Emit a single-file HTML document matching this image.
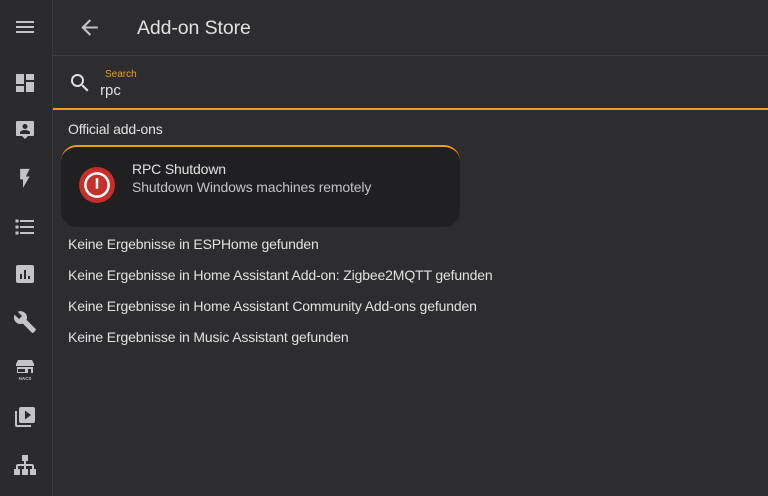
<!DOCTYPE html>
<html><head><meta charset="utf-8"><style>
*{margin:0;padding:0;box-sizing:border-box}
body{width:768px;height:496px;overflow:hidden;background:#2d2d2f;font-family:"Liberation Sans",Roboto,sans-serif;color:#e1e1e1;position:relative}
.side{position:absolute;left:0;top:0;width:53px;height:496px;background:#2b2b2d;border-right:1px solid #3a3a3c}
.side svg{position:absolute;left:13px;width:24px;height:24px;fill:#c4c4c6}
.hdr{position:absolute;left:53px;top:0;right:0;height:56px;border-bottom:1px solid #3e3e40;background:#2d2d2f}
.t{position:absolute;font-size:14px;color:#e1e1e1;letter-spacing:-0.15px}
</style></head><body>
<div class="side">
<svg style="top:15px" viewBox="0 0 24 24"><path d="M3,6H21V8H3V6M3,11H21V13H3V11M3,16H21V18H3V16Z"/></svg>
<svg style="top:71px" viewBox="0 0 24 24"><path d="M13,3V9H21V3M13,21H21V11H13M3,21H11V15H3M3,13H11V3H3V13Z"/></svg>
<svg style="top:118px" viewBox="0 0 24 24"><path d="M4,3H20A1,1 0 0 1 21,4V17A1,1 0 0 1 20,18H15L12,21L9,18H4A1,1 0 0 1 3,17V4A1,1 0 0 1 4,3M12,6A2.5,2.5 0 1 0 12,11A2.5,2.5 0 1 0 12,6M7,16H17V14.5C17,13 14.5,12 12,12C9.5,12 7,13 7,14.5Z"/></svg>
<svg style="top:167px" viewBox="0 0 24 24"><path d="M7,2V13H10V22L17,10H13L17,2H7Z" transform="translate(0.5 0) scale(0.95)"/></svg>
<svg style="top:215px" viewBox="0 0 24 24"><path d="M7,5H21V7H7V5M7,13V11H21V13H7M7,19V17H21V19H7M2.5,4.5H5.5V7.5H2.5ZM2.5,10.5H5.5V13.5H2.5ZM2.5,16.5H5.5V19.5H2.5Z"/></svg>
<svg style="top:262px" viewBox="0 0 24 24"><path d="M5,3H19A2,2 0 0 1 21,5V19A2,2 0 0 1 19,21H5A2,2 0 0 1 3,19V5A2,2 0 0 1 5,3M7,12V17H9V12H7M11,8V17H13V8H11M15,14V17H17V14H15Z"/></svg>
<svg style="top:310px" viewBox="0 0 24 24"><path d="M22.7,19L13.6,9.9C14.5,7.6 14,4.9 12.1,3C10.1,1 7.1,0.6 4.7,1.7L9,6L6,9L1.6,4.7C0.4,7.1 0.9,10.1 2.9,12.1C4.8,14 7.5,14.5 9.8,13.6L18.9,22.7C19.3,23.1 19.9,23.1 20.3,22.7L22.6,20.4C23.1,20 23.1,19.3 22.7,19Z"/></svg>
<svg style="top:358px" viewBox="0 0 24 24"><path d="M5,2H19L21,6V8H3V6ZM4,9H20V15H18V11H15V15H4ZM5,11V14H12V11Z"/><text x="12" y="22" font-size="4.5" text-anchor="middle" font-family="Liberation Sans" font-weight="bold" fill="#c4c4c6">HACS</text></svg>
<svg style="top:405px" viewBox="0 0 24 24"><path d="M4,6H2V20A2,2 0 0,0 4,22H18V20H4V6M20,2H8A2,2 0 0,0 6,4V16A2,2 0 0,0 8,18H20A2,2 0 0,0 22,16V4A2,2 0 0,0 20,2M12,14.5V5.5L18,10L12,14.5Z"/></svg>
<svg style="top:453px" viewBox="0 0 24 24"><path d="M9,2V8H11V11H5C3.89,11 3,11.89 3,13V16H1V22H7V16H5V13H11V16H9V22H15V16H13V13H19V16H17V22H23V16H21V13C21,11.89 20.11,11 19,11H13V8H15V2H9Z"/></svg>
</div>
<div class="hdr">
<svg style="position:absolute;left:24px;top:15px;width:25px;height:25px;fill:#c4c4c6" viewBox="0 0 24 24"><path d="M20,11V13H8L13.5,18.5L12.08,19.92L4.16,12L12.08,4.08L13.5,5.5L8,11H20Z"/></svg>
<div style="position:absolute;left:84px;top:17px;font-size:19.5px;letter-spacing:-0.1px;color:#e1e1e1">Add-on Store</div>
</div>
<svg style="position:absolute;left:68px;top:71px;width:24px;height:24px;fill:#e1e1e1" viewBox="0 0 24 24"><path d="M9.5,3A6.5,6.5 0 0,1 16,9.5C16,11.11 15.41,12.59 14.44,13.73L14.71,14H15.5L20.5,19L19,20.5L14,15.5V14.71L13.730,14.44C12.59,15.41 11.11,16 9.5,16A6.5,6.5 0 0,1 3,9.5A6.5,6.5 0 0,1 9.5,3M9.5,5C7,5 5,7 5,9.5C5,12 7,14 9.5,14C12,14 14,12 14,9.5C14,7 12,5 9.5,5Z"/></svg>
<div style="position:absolute;left:105px;top:69px;font-size:10px;color:#f39a1b">Search</div>
<div style="position:absolute;left:100px;top:82px;font-size:15px;color:#e1e1e1">rpc</div>
<div style="position:absolute;left:53px;top:108px;right:0;height:2px;background:#f39a1b"></div>
<div class="t" style="left:68px;top:121px">Official add-ons</div>
<div style="position:absolute;left:61px;top:145px;width:399px;height:82px;background:#202022;border-radius:16px;border-top:2px solid #f39a1b"></div>
<svg style="position:absolute;left:78px;top:166px;width:38px;height:38px" viewBox="0 0 36 36"><circle cx="18" cy="18" r="17" fill="#c62f2a"/><circle cx="18" cy="18" r="11" fill="none" stroke="#fff" stroke-width="2.4"/><rect x="16.8" y="11.5" width="2.4" height="10" fill="#fff"/></svg>
<div class="t" style="left:132px;top:161px">RPC Shutdown</div>
<div class="t" style="left:132px;top:179px;color:#c4c4c6">Shutdown Windows machines remotely</div>
<div class="t" style="left:68px;top:236px">Keine Ergebnisse in ESPHome gefunden</div>
<div class="t" style="left:68px;top:267px">Keine Ergebnisse in Home Assistant Add-on: Zigbee2MQTT gefunden</div>
<div class="t" style="left:68px;top:298px">Keine Ergebnisse in Home Assistant Community Add-ons gefunden</div>
<div class="t" style="left:68px;top:329px">Keine Ergebnisse in Music Assistant gefunden</div>
</body></html>
